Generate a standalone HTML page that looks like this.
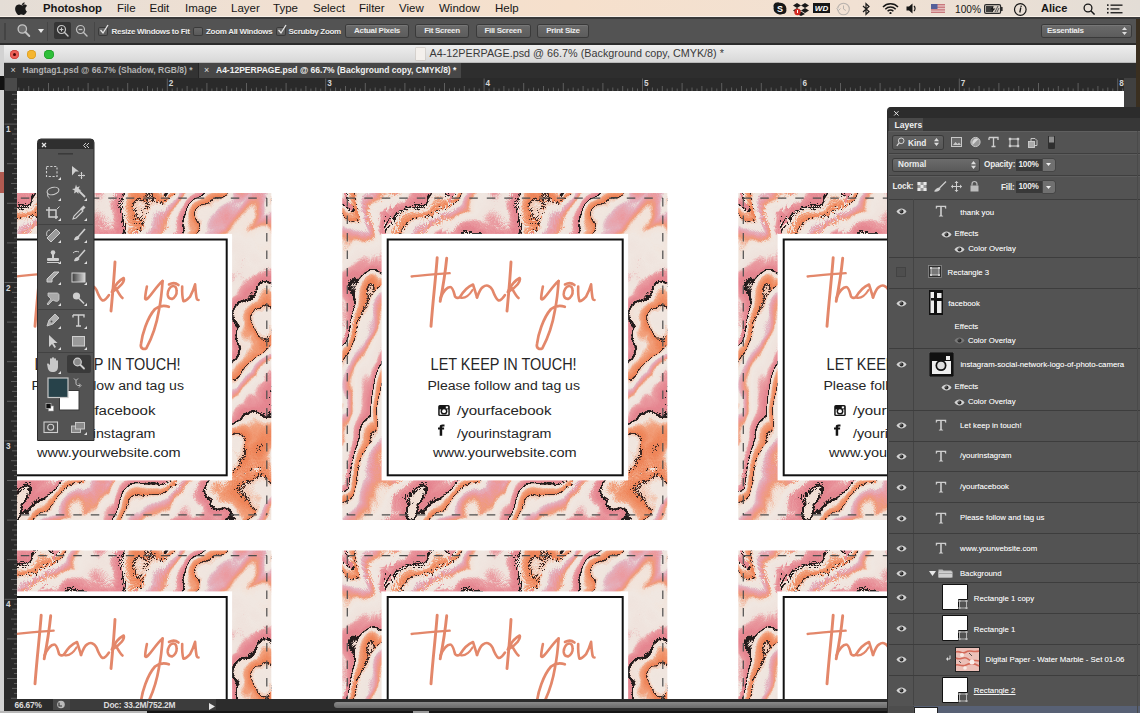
<!DOCTYPE html>
<html><head><meta charset="utf-8">
<style>
*{margin:0;padding:0;box-sizing:border-box}
html,body{width:1140px;height:713px;overflow:hidden;background:#3a3a3a;font-family:"Liberation Sans",sans-serif}
.a{position:absolute}
#menubar{left:0;top:0;width:1140px;height:16px;background:linear-gradient(90deg,#e4ddd6 0%,#f0e0d2 22%,#f6e0cc 50%,#f1e1d3 75%,#e3ddd6 100%);}
#menubar span{position:absolute;top:2px;font-size:11.5px;color:#161616;line-height:13px;white-space:nowrap}
#mbline{left:0;top:16px;width:1140px;height:1px;background:#f8f0e8}
#mbdark{left:0;top:17px;width:1140px;height:2px;background:#393939}
#opts{left:0;top:19px;width:1140px;height:24px;background:#535353}
#optsb{left:0;top:43px;width:1140px;height:2px;background:#2c2c2c}
.ot{position:absolute;top:27px;font-size:8px;font-weight:bold;line-height:10px;color:#ececec;white-space:nowrap;letter-spacing:-0.3px;text-shadow:0 1px 0 #3a3a3a}
.cb{position:absolute;top:27px;width:10px;height:9px;border-radius:2px;background:linear-gradient(#6a6a6a,#575757);box-shadow:inset 0 0 0 1px #3a3a3a}
.btn{position:absolute;top:25px;height:12px;border-radius:2px;background:linear-gradient(#6a6a6a,#5c5c5c);box-shadow:0 0 0 1px #3a3a3a, inset 0 1px 0 #777;color:#ececec;font-size:8px;font-weight:bold;line-height:12px;text-align:center;white-space:nowrap;letter-spacing:-0.3px}
#deskL{left:0;top:45px;width:4px;height:668px;background:#d2d2d2}
#deskR{left:1136px;top:19px;width:4px;height:694px;background:#3a2f20}
#title{left:4px;top:45px;width:1132px;height:18px;background:linear-gradient(#eeeeee,#d8d8d8);border-bottom:1px solid #b8b8b8}
#tabs{left:4px;top:63px;width:1132px;height:15px;background:#2e2e2e}
.tab{position:absolute;top:0;height:15px;font-size:8.5px;font-weight:bold;line-height:15px;white-space:nowrap;color:#9a9a9a}
#ruler{left:4px;top:78px;width:1120px;height:13px;background:#2a2a2a}
#vruler{left:4px;top:91px;width:13px;height:608px;background:#2a2a2a}
#corner{left:5px;top:78px;width:12px;height:13px;background:#4a4a4a}
#canvas{left:17px;top:91px;width:1107px;height:608px;background:#fff;overflow:hidden}
#vscroll{left:1124px;top:78px;width:12px;height:621px;background:#404040}
#status{left:4px;top:699px;width:1132px;height:14px;background:#2c2c2c}
</style></head><body>
<!-- MENUBAR -->
<div id="menubar" class="a">
  <svg class="a" style="left:15px;top:1px" width="14" height="15" viewBox="0 0 14 15"><path d="M9.6 1.2c-.8.1-1.7.6-2.2 1.3-.4.5-.8 1.3-.7 2.1.9 0 1.7-.5 2.2-1.2.5-.6.8-1.4.7-2.2zM11.9 10.3c-.3.8-.5 1.1-.9 1.8-.6.9-1.4 2-2.4 2-.9 0-1.1-.6-2.3-.6s-1.5.6-2.4.6c-1 0-1.7-1-2.3-1.9C-.1 9.8-.3 6.9.8 5.3c.7-1.1 1.9-1.8 3-1.8s1.8.6 2.8.6c.9 0 1.5-.6 2.8-.6 1 0 2 .5 2.7 1.4-2.4 1.3-2 4.7-.2 5.4z" fill="#1a1a1a"/></svg>
  <span style="left:43px;font-weight:bold;font-size:11.3px">Photoshop</span>
  <span style="left:117px">File</span>
  <span style="left:149.5px">Edit</span>
  <span style="left:185px">Image</span>
  <span style="left:231px">Layer</span>
  <span style="left:273px">Type</span>
  <span style="left:313px">Select</span>
  <span style="left:359px">Filter</span>
  <span style="left:399px">View</span>
  <span style="left:439px">Window</span>
  <span style="left:495px">Help</span>
  <!-- status icons -->
  <svg class="a" style="left:773px;top:2px" width="14" height="13" viewBox="0 0 14 13"><path d="M4 0.5a3.5 3.5 0 0 0-3.3 4.7A6 6 0 0 0 7 12.4a6 6 0 0 0 2.8-.4A3.5 3.5 0 0 0 13.3 7.6 6 6 0 0 0 6.6.7 3.5 3.5 0 0 0 4 .5z" fill="#171717"/><text x="7" y="10" font-size="9" font-weight="bold" fill="#fff" text-anchor="middle" font-family="Liberation Sans">S</text></svg>
  <svg class="a" style="left:793px;top:2px" width="16" height="14" viewBox="0 0 16 14"><path d="M4 1l4 2.5-4 2.5-4-2.5zM12 1l4 2.5-4 2.5-4-2.5zM4 6l4 2.5-4 2.5-4-2.5zM12 6l4 2.5-4 2.5-4-2.5zM8 9.5l4 2.5-4 2-4-2z" fill="#181818"/><circle cx="4.5" cy="10" r="3.2" fill="#d42a22"/><rect x="4" y="8" width="1" height="3" fill="#fff"/></svg>
  <svg class="a" style="left:813px;top:3px" width="17" height="10" viewBox="0 0 17 10"><rect width="17" height="10" fill="#161616"/><text x="8.5" y="8" font-size="8" font-weight="bold" font-style="italic" fill="#fff" text-anchor="middle" font-family="Liberation Sans">WD</text></svg>
  <svg class="a" style="left:836px;top:2px" width="14" height="14" viewBox="0 0 14 14"><circle cx="7.5" cy="7" r="5.8" fill="none" stroke="#b8b2ad" stroke-width="1.1"/><path d="M7.5 3.5V7l2.3 1.5" fill="none" stroke="#b8b2ad" stroke-width="1"/><path d="M0.5 6.5l2 2 2-2" fill="#e9e0d8" stroke="#b8b2ad" stroke-width="1"/></svg>
  <svg class="a" style="left:862px;top:2px" width="9" height="14" viewBox="0 0 9 14"><path d="M1 4l6 5.5-3 2.8V1.7l3 2.8L1 10" fill="none" stroke="#1a1a1a" stroke-width="1.2"/></svg>
  <svg class="a" style="left:882px;top:3px" width="17" height="11" viewBox="0 0 17 11"><path d="M1 4a10.5 10.5 0 0 1 15 0M3.3 6.2a7.2 7.2 0 0 1 10.4 0M5.6 8.3a4 4 0 0 1 5.8 0" fill="none" stroke="#161616" stroke-width="1.5"/><circle cx="8.5" cy="10" r="1.1" fill="#161616"/></svg>
  <svg class="a" style="left:906px;top:3px" width="11" height="11" viewBox="0 0 11 11"><path d="M0.5 3.5h2.5l3.5-3v10l-3.5-3H0.5z" fill="#161616"/><path d="M8 3a3.5 3.5 0 0 1 0 5" fill="none" stroke="#161616" stroke-width="1.2"/></svg>
  <svg class="a" style="left:931px;top:4px" width="14" height="9" viewBox="0 0 14 9"><rect width="14" height="9" fill="#c9787c"/><rect y="1.3" width="14" height="1.3" fill="#e6c4c2"/><rect y="3.9" width="14" height="1.3" fill="#e6c4c2"/><rect y="6.5" width="14" height="1.3" fill="#e6c4c2"/><rect width="6.5" height="5" fill="#55609a"/></svg>
  <span style="left:955px;font-size:10.2px;top:3px">100%</span>
  <svg class="a" style="left:984px;top:4px" width="19" height="10" viewBox="0 0 19 10"><rect x="0.6" y="0.6" width="16" height="8.8" rx="1.5" fill="#d9d0c6" stroke="#2a2a2a" stroke-width="1.2"/><rect x="17" y="3" width="1.6" height="4" fill="#2a2a2a"/><rect x="2" y="2" width="7" height="6" fill="#3c3c3c"/><path d="M9.8 1.8L6.2 5.4h2.6l-1.2 3 3.8-3.8H8.8z" fill="#111"/><path d="M11 8l3-6M13 8l2-4" stroke="#555" stroke-width="1"/></svg>
  <svg class="a" style="left:1013px;top:3px" width="15" height="13" viewBox="0 0 15 13"><circle cx="7.3" cy="6.5" r="5.8" fill="none" stroke="#161616" stroke-width="1.2"/><path d="M7.8 4.5l-1 5" stroke="#161616" stroke-width="1.3"/><circle cx="8.1" cy="3.3" r=".8" fill="#161616"/></svg>
  <span style="left:1041px;font-weight:bold;font-size:11px;top:2px">Alice</span>
  <svg class="a" style="left:1083px;top:3px" width="13" height="12" viewBox="0 0 13 12"><circle cx="5" cy="5" r="3.9" fill="none" stroke="#161616" stroke-width="1.3"/><path d="M7.8 7.8l3.8 3.8" stroke="#161616" stroke-width="1.4"/></svg>
  <svg class="a" style="left:1107px;top:4px" width="16" height="10" viewBox="0 0 16 10"><rect x="0" y="0.3" width="1.6" height="1.6" fill="#161616"/><rect x="0" y="4.1" width="1.6" height="1.6" fill="#161616"/><rect x="0" y="7.9" width="1.6" height="1.6" fill="#161616"/><rect x="3.5" y="0.5" width="12" height="1.3" fill="#161616"/><rect x="3.5" y="4.3" width="9" height="1.3" fill="#161616"/><rect x="3.5" y="8.1" width="12" height="1.3" fill="#161616"/></svg>
</div>
<div id="mbline" class="a"></div>
<div id="mbdark" class="a"></div>
<!-- OPTIONS BAR -->
<div id="opts" class="a"></div>
<div id="optsb" class="a"></div>
<div class="a" style="left:4px;top:23px;width:2px;height:17px;background:#444"></div>
<svg class="a" style="left:16px;top:23px" width="16" height="15" viewBox="0 0 16 15"><circle cx="6.3" cy="6" r="4.2" fill="#6e6e6e" stroke="#c4c4c4" stroke-width="1.3"/><path d="M9.3 9l4 4" stroke="#c4c4c4" stroke-width="1.9" stroke-linecap="round"/></svg>
<svg class="a" style="left:38px;top:29px" width="6" height="4" viewBox="0 0 6 4"><path d="M0 0h6L3 4z" fill="#e8e8e8"/></svg>
<div class="a" style="left:47px;top:22px;width:1px;height:19px;background:#464646"></div>
<div class="a" style="left:54px;top:22px;width:17px;height:17px;background:#353535;border-radius:2px"></div>
<svg class="a" style="left:55px;top:23px" width="15" height="15" viewBox="0 0 15 15"><circle cx="6.5" cy="6.5" r="4" fill="none" stroke="#c8c8c8" stroke-width="1.2"/><path d="M4.6 6.5h3.8M6.5 4.6v3.8" stroke="#c8c8c8" stroke-width="1.1"/><path d="M9.3 9.3l3.7 3.7" stroke="#c8c8c8" stroke-width="1.4" stroke-linecap="round"/></svg>
<svg class="a" style="left:74px;top:23px" width="15" height="15" viewBox="0 0 15 15"><circle cx="6.5" cy="6.5" r="4" fill="none" stroke="#c0c0c0" stroke-width="1.2"/><path d="M4.6 6.5h3.8" stroke="#c0c0c0" stroke-width="1.3"/><path d="M9.3 9.3l3.7 3.7" stroke="#c0c0c0" stroke-width="1.4" stroke-linecap="round"/></svg>
<div class="a" style="left:94px;top:22px;width:1px;height:19px;background:#464646"></div>
<div class="cb" style="left:98px"></div>
<svg class="a" style="left:99px;top:24px" width="10" height="11" viewBox="0 0 10 11"><path d="M1.5 6l2.5 3 5-8" fill="none" stroke="#e6e6e6" stroke-width="1.3"/></svg>
<span class="ot" style="left:111.5px">Resize Windows to Fit</span>
<div class="cb" style="left:193px"></div>
<span class="ot" style="left:206px">Zoom All Windows</span>
<div class="cb" style="left:276px"></div>
<svg class="a" style="left:277px;top:24px" width="10" height="11" viewBox="0 0 10 11"><path d="M1.5 6l2.5 3 5-8" fill="none" stroke="#e6e6e6" stroke-width="1.3"/></svg>
<span class="ot" style="left:288.5px">Scrubby Zoom</span>
<div class="btn" style="left:346px;width:62px">Actual Pixels</div>
<div class="btn" style="left:416px;width:52px">Fit Screen</div>
<div class="btn" style="left:476.5px;width:53px">Fill Screen</div>
<div class="btn" style="left:538px;width:50px">Print Size</div>
<div class="btn" style="left:1042px;width:89px;text-align:left;padding-left:5px">Essentials<svg class="a" style="right:4px;top:2px" width="5" height="8" viewBox="0 0 5 8"><path d="M0 3h5L2.5 0zM0 5h5L2.5 8z" fill="#ddd"/></svg></div>
<!-- DESKTOP EDGES -->
<div id="deskL" class="a"></div>
<div class="a" style="left:0;top:76px;width:4px;height:14px;background:#111"></div>
<div class="a" style="left:0;top:172px;width:4px;height:21px;background:#b05a50"></div>
<div id="deskR" class="a"></div>
<!-- TITLE -->
<div id="title" class="a"></div>
<div class="a" style="left:9.5px;top:49.7px;width:9.6px;height:9.6px;border-radius:50%;background:#ec5f58;box-shadow:inset 0 0 0 .7px #c8403a"><div class="a" style="left:3.1px;top:3.1px;width:3.4px;height:3.4px;border-radius:50%;background:#4a0806"></div></div>
<div class="a" style="left:26.7px;top:49.7px;width:9.6px;height:9.6px;border-radius:50%;background:#f5b631;box-shadow:inset 0 0 0 .7px #d89a20"></div>
<div class="a" style="left:44.2px;top:49.7px;width:9.6px;height:9.6px;border-radius:50%;background:#2fbf3a;box-shadow:inset 0 0 0 .7px #1f9a28"></div>
<div class="a" style="left:416px;top:48px;width:9px;height:12px;background:#f4f0ec;box-shadow:0 0 0 .5px #c8c0b8"></div>
<span class="a" style="left:429.5px;top:47px;font-size:10.8px;line-height:13px;color:#3a3a3a;white-space:nowrap">A4-12PERPAGE.psd @ 66.7% (Background copy, CMYK/8) *</span>
<!-- TABS -->
<div id="tabs" class="a">
  <div class="tab" style="left:0;width:194px;background:#333"><span style="position:absolute;left:6.5px;color:#d0d0d0;font-weight:normal;font-size:9px">&#215;</span><span style="position:absolute;left:18.5px;color:#b4b4b4">Hangtag1.psd @ 66.7% (Shadow, RGB/8) *</span></div>
  <div class="a" style="left:194px;top:0;width:1px;height:15px;background:#262626"></div>
  <div class="tab" style="left:195px;width:262px;background:#474747;color:#f2f2f2"><span style="position:absolute;left:5px;color:#e0e0e0;font-weight:normal;font-size:9px">&#215;</span><span style="position:absolute;left:17px">A4-12PERPAGE.psd @ 66.7% (Background copy, CMYK/8) *</span></div>
</div>
<!-- RULERS -->
<div id="ruler" class="a"></div>
<div id="vruler" class="a"></div>
<div id="corner" class="a"></div>
<div id="vscroll" class="a"></div>
<!-- CANVAS -->
<div id="canvas" class="a">
<svg width="1107" height="608" viewBox="0 0 1107 608" style="position:absolute;left:0;top:0">
<defs>
<linearGradient id="bands" gradientUnits="userSpaceOnUse" x1="0" y1="0" x2="70" y2="45" spreadMethod="repeat">
 <stop offset="0" stop-color="#f0e7e1"/>
 <stop offset="0.11" stop-color="#efe2dc"/>
 <stop offset="0.16" stop-color="#ea9ea3"/>
 <stop offset="0.26" stop-color="#e5848f"/>
 <stop offset="0.295" stop-color="#e08a90"/>
 <stop offset="0.30" stop-color="#1f1a1a"/>
 <stop offset="0.328" stop-color="#2a2020"/>
 <stop offset="0.335" stop-color="#f3ddd2"/>
 <stop offset="0.39" stop-color="#f0e4dc"/>
 <stop offset="0.44" stop-color="#f2a27e"/>
 <stop offset="0.53" stop-color="#ee8458"/>
 <stop offset="0.545" stop-color="#ee8458"/>
 <stop offset="0.55" stop-color="#3a2622"/>
 <stop offset="0.562" stop-color="#3a2622"/>
 <stop offset="0.567" stop-color="#f1c1aa"/>
 <stop offset="0.61" stop-color="#f1e6df"/>
 <stop offset="0.70" stop-color="#eee4de"/>
 <stop offset="0.74" stop-color="#e3b3c0"/>
 <stop offset="0.81" stop-color="#eb9aa0"/>
 <stop offset="0.88" stop-color="#f09a78"/>
 <stop offset="0.93" stop-color="#f2e2d8"/>
 <stop offset="1" stop-color="#f0e7e1"/>
</linearGradient>
<filter id="mf" x="-20%" y="-20%" width="140%" height="140%">
 <feTurbulence type="turbulence" baseFrequency="0.009 0.007" numOctaves="3" seed="3" result="t"/>
 <feDisplacementMap in="SourceGraphic" in2="t" scale="110" xChannelSelector="R" yChannelSelector="G"/>
 <feGaussianBlur stdDeviation="0.55"/>
</filter>
<clipPath id="cardclip"><rect x="0" y="0" width="325" height="327"/></clipPath>
<g id="card">
 <g clip-path="url(#cardclip)"><g filter="url(#mf)"><rect x="-100" y="-100" width="525" height="527" fill="url(#bands)"/></g></g>
 <path d="M4.5 5.2H320.5M5 5V322M320.5 5V322M4.5 322H320.5" stroke="#4d4d4d" stroke-width="1.2" stroke-dasharray="8.5 9" fill="none"/>
 <rect x="39.3" y="41" width="246.5" height="246.5" fill="#fff"/>
 <rect x="45.4" y="46.6" width="235" height="235.8" fill="none" stroke="#111" stroke-width="2"/>
 <g transform="translate(-342.3 -192.9)" fill="none" stroke="#e3876a" stroke-width="2.6" stroke-linecap="round" stroke-linejoin="round">
  <path d="M411.6 276.5C422 275.5 436 274 449.7 273.2" stroke-width="2.3"/>
  <path d="M437.2 257.7C436 275 433 300 431 326.3" stroke-width="2.9"/>
  <path d="M446.7 258.3C445 275 442 292 440.2 301.3" stroke-width="2.9"/>
  <path d="M440.5 298C443 292 447 287 450.2 287C453 287 454 293 455 296.5C456 298 458 298.5 460 297"/>
  <path d="M460 297C463 292 468 286.5 473 284.5C474.5 289 476 294 477 297.5"/><path d="M461 297.8C465 298.3 469.5 295 472.5 290" stroke-width="2.2"/>
  <path d="M477 297.5C479 292 481 288 483 287C486 284.5 490 285 492.5 290C494 294 496 299 498.4 300.4C500.5 301 503 298 505 295"/>
  <path d="M511 262C510 280 508.5 295 507 311" stroke-width="2.9"/>
  <path d="M507.8 292C510 287 514 281 519.7 278C521 281 517 287 508 292M511.8 288C514 292 516 296 518.5 298"/>
  <path d="M542.9 286.6C542 291 541 296 541.2 298.9C542 301 546 296 549 292C552 288 555 284 558.6 281"/>
  <path d="M558.6 281C558 290 557 300 555 310C553 322 549 336 542.3 348.3C539.5 350 536 348 537 344C538 335 543 318 551 309C555 306 560 305 564.8 306.8" stroke-width="2.7"/>
  <path d="M569.3 286C566 286 563.5 291 563.7 294.4C564 298 566 299 568.1 298.9C571 298 573 294 572.6 291C572.5 288 571 286 569.3 286M565 284.5C568 282.8 572 283 574.5 285"/>
  <path d="M578.2 286.6C578 292 578.5 298 579.4 301.2C581 301.5 584 299 586.1 296.7C588 293 590 288 591.1 284.3C591.5 290 592 296 592.8 298.9C593 299.5 594 300 594.5 300"/>
 </g>
 <g font-family="Liberation Sans" fill="#262626">
  <text x="88.3" y="177.3" font-size="16.2" textLength="146" lengthAdjust="spacingAndGlyphs">LET KEEP IN TOUCH!</text>
  <text x="85.1" y="196.9" font-size="12" textLength="152.6" lengthAdjust="spacingAndGlyphs">Please follow and tag us</text>
  <text x="114.7" y="221.7" font-size="12" textLength="94.5" lengthAdjust="spacingAndGlyphs">/yourfacebook</text>
  <text x="114.7" y="244.9" font-size="12" textLength="94.5" lengthAdjust="spacingAndGlyphs">/yourinstagram</text>
  <text x="90.7" y="264.5" font-size="12" textLength="143.6" lengthAdjust="spacingAndGlyphs">www.yourwebsite.com</text>
 </g>
 <g transform="translate(95.9 212.2)"><rect x="0" y="0" width="11.6" height="11" rx="1.6" fill="#151515"/><rect x="1.5" y="4.3" width="8.6" height="5.3" fill="#fff"/><circle cx="5.8" cy="6.1" r="3.4" fill="#151515"/><circle cx="5.8" cy="6.1" r="1.9" fill="#fff"/><rect x="7.6" y="1.3" width="2.3" height="2" fill="#fff"/></g>
 <path d="M97.4 242.9V233.8C97.4 232.2 98.4 231.5 100.2 231.5H102.2V233.6H100.8C100.1 233.6 99.9 233.9 99.9 234.6V242.9Z" fill="#151515"/><rect x="95.7" y="234.6" width="6.1" height="2" fill="#151515"/>
</g>
</defs>
<use href="#card" x="-70.7" y="101.9"/>
<use href="#card" x="325.3" y="101.9"/>
<use href="#card" x="721.3" y="101.9"/>
<use href="#card" x="-70.7" y="459.4"/>
<use href="#card" x="325.3" y="459.4"/>
<use href="#card" x="721.3" y="459.4"/>
</svg>
</div>
<!-- STATUS -->
<div id="status" class="a"></div>
<!--RULERS-->
<svg class="a" style="left:0;top:0" width="1140" height="100" viewBox="0 0 1140 100"><path d="M18.8 87.5V91 M23.8 88.5V91 M28.7 86V91 M33.7 88.5V91 M38.6 87.5V91 M43.6 88.5V91 M48.5 83V91 M53.5 88.5V91 M58.4 87.5V91 M63.4 88.5V91 M68.3 86V91 M73.3 88.5V91 M78.2 87.5V91 M83.2 88.5V91 M88.1 83V91 M93.1 88.5V91 M98.0 87.5V91 M103.0 88.5V91 M107.9 86V91 M112.9 88.5V91 M117.8 87.5V91 M122.8 88.5V91 M127.7 83V91 M132.7 88.5V91 M137.6 87.5V91 M142.6 88.5V91 M147.5 86V91 M152.5 88.5V91 M157.4 87.5V91 M162.4 88.5V91 M167.3 78.5V91 M172.2 88.5V91 M177.2 87.5V91 M182.2 88.5V91 M187.1 86V91 M192.1 88.5V91 M197.0 87.5V91 M202.0 88.5V91 M206.9 83V91 M211.9 88.5V91 M216.8 87.5V91 M221.8 88.5V91 M226.7 86V91 M231.7 88.5V91 M236.6 87.5V91 M241.6 88.5V91 M246.5 83V91 M251.5 88.5V91 M256.4 87.5V91 M261.4 88.5V91 M266.3 86V91 M271.2 88.5V91 M276.2 87.5V91 M281.2 88.5V91 M286.1 83V91 M291.1 88.5V91 M296.0 87.5V91 M301.0 88.5V91 M305.9 86V91 M310.9 88.5V91 M315.8 87.5V91 M320.8 88.5V91 M325.7 78.5V91 M330.6 88.5V91 M335.6 87.5V91 M340.6 88.5V91 M345.5 86V91 M350.5 88.5V91 M355.4 87.5V91 M360.4 88.5V91 M365.3 83V91 M370.2 88.5V91 M375.2 87.5V91 M380.1 88.5V91 M385.1 86V91 M390.1 88.5V91 M395.0 87.5V91 M400.0 88.5V91 M404.9 83V91 M409.9 88.5V91 M414.8 87.5V91 M419.8 88.5V91 M424.7 86V91 M429.7 88.5V91 M434.6 87.5V91 M439.6 88.5V91 M444.5 83V91 M449.5 88.5V91 M454.4 87.5V91 M459.4 88.5V91 M464.3 86V91 M469.2 88.5V91 M474.2 87.5V91 M479.2 88.5V91 M484.1 78.5V91 M489.1 88.5V91 M494.0 87.5V91 M499.0 88.5V91 M503.9 86V91 M508.9 88.5V91 M513.8 87.5V91 M518.8 88.5V91 M523.7 83V91 M528.7 88.5V91 M533.6 87.5V91 M538.5 88.5V91 M543.5 86V91 M548.5 88.5V91 M553.4 87.5V91 M558.4 88.5V91 M563.3 83V91 M568.2 88.5V91 M573.2 87.5V91 M578.2 88.5V91 M583.1 86V91 M588.0 88.5V91 M593.0 87.5V91 M598.0 88.5V91 M602.9 83V91 M607.9 88.5V91 M612.8 87.5V91 M617.8 88.5V91 M622.7 86V91 M627.7 88.5V91 M632.6 87.5V91 M637.5 88.5V91 M642.5 78.5V91 M647.5 88.5V91 M652.4 87.5V91 M657.4 88.5V91 M662.3 86V91 M667.2 88.5V91 M672.2 87.5V91 M677.2 88.5V91 M682.1 83V91 M687.0 88.5V91 M692.0 87.5V91 M697.0 88.5V91 M701.9 86V91 M706.9 88.5V91 M711.8 87.5V91 M716.8 88.5V91 M721.7 83V91 M726.7 88.5V91 M731.6 87.5V91 M736.5 88.5V91 M741.5 86V91 M746.5 88.5V91 M751.4 87.5V91 M756.4 88.5V91 M761.3 83V91 M766.2 88.5V91 M771.2 87.5V91 M776.2 88.5V91 M781.1 86V91 M786.0 88.5V91 M791.0 87.5V91 M796.0 88.5V91 M800.9 78.5V91 M805.9 88.5V91 M810.8 87.5V91 M815.8 88.5V91 M820.7 86V91 M825.7 88.5V91 M830.6 87.5V91 M835.5 88.5V91 M840.5 83V91 M845.5 88.5V91 M850.4 87.5V91 M855.4 88.5V91 M860.3 86V91 M865.2 88.5V91 M870.2 87.5V91 M875.2 88.5V91 M880.1 83V91 M885.0 88.5V91 M890.0 87.5V91 M895.0 88.5V91 M899.9 86V91 M904.9 88.5V91 M909.8 87.5V91 M914.8 88.5V91 M919.7 83V91 M924.7 88.5V91 M929.6 87.5V91 M934.5 88.5V91 M939.5 86V91 M944.5 88.5V91 M949.4 87.5V91 M954.4 88.5V91 M959.3 78.5V91 M964.2 88.5V91 M969.2 87.5V91 M974.2 88.5V91 M979.1 86V91 M984.0 88.5V91 M989.0 87.5V91 M994.0 88.5V91 M998.9 83V91 M1003.9 88.5V91 M1008.8 87.5V91 M1013.8 88.5V91 M1018.7 86V91 M1023.7 88.5V91 M1028.6 87.5V91 M1033.5 88.5V91 M1038.5 83V91 M1043.5 88.5V91 M1048.4 87.5V91 M1053.4 88.5V91 M1058.3 86V91 M1063.2 88.5V91 M1068.2 87.5V91 M1073.2 88.5V91 M1078.1 83V91 M1083.0 88.5V91 M1088.0 87.5V91 M1093.0 88.5V91 M1097.9 86V91 M1102.9 88.5V91 M1107.8 87.5V91 M1112.8 88.5V91 M1117.7 78.5V91 M1122.7 88.5V91" stroke="#5e5e5e" stroke-width="1" fill="none"/><text x="168.8" y="86" font-size="8.2" font-weight="bold" fill="#d6d6d6" font-family="Liberation Sans">2</text><text x="327.2" y="86" font-size="8.2" font-weight="bold" fill="#d6d6d6" font-family="Liberation Sans">3</text><text x="485.6" y="86" font-size="8.2" font-weight="bold" fill="#d6d6d6" font-family="Liberation Sans">4</text><text x="644.0" y="86" font-size="8.2" font-weight="bold" fill="#d6d6d6" font-family="Liberation Sans">5</text><text x="802.4" y="86" font-size="8.2" font-weight="bold" fill="#d6d6d6" font-family="Liberation Sans">6</text><text x="960.8" y="86" font-size="8.2" font-weight="bold" fill="#d6d6d6" font-family="Liberation Sans">7</text><text x="1119.2" y="86" font-size="8.2" font-weight="bold" fill="#d6d6d6" font-family="Liberation Sans">8</text></svg>
<svg class="a" style="left:0;top:0" width="20" height="713" viewBox="0 0 20 713"><path d="M12 94.4H17 M14 99.3H17 M11 104.3H17 M14 109.2H17 M12 114.2H17 M14 119.2H17 M4.5 124.1H17 M14 129.0H17 M12 134.0H17 M14 138.9H17 M11 143.9H17 M14 148.8H17 M12 153.8H17 M14 158.8H17 M7 163.7H17 M14 168.6H17 M12 173.6H17 M14 178.6H17 M11 183.5H17 M14 188.4H17 M12 193.4H17 M14 198.3H17 M7 203.3H17 M14 208.2H17 M12 213.2H17 M14 218.1H17 M11 223.1H17 M14 228.1H17 M12 233.0H17 M14 237.9H17 M7 242.9H17 M14 247.8H17 M12 252.8H17 M14 257.8H17 M11 262.7H17 M14 267.6H17 M12 272.6H17 M14 277.6H17 M4.5 282.5H17 M14 287.4H17 M12 292.4H17 M14 297.4H17 M11 302.3H17 M14 307.2H17 M12 312.2H17 M14 317.1H17 M7 322.1H17 M14 327.1H17 M12 332.0H17 M14 336.9H17 M11 341.9H17 M14 346.9H17 M12 351.8H17 M14 356.8H17 M7 361.7H17 M14 366.6H17 M12 371.6H17 M14 376.6H17 M11 381.5H17 M14 386.4H17 M12 391.4H17 M14 396.4H17 M7 401.3H17 M14 406.2H17 M12 411.2H17 M14 416.1H17 M11 421.1H17 M14 426.1H17 M12 431.0H17 M14 436.0H17 M4.5 440.9H17 M14 445.9H17 M12 450.8H17 M14 455.8H17 M11 460.7H17 M14 465.6H17 M12 470.6H17 M14 475.6H17 M7 480.5H17 M14 485.5H17 M12 490.4H17 M14 495.4H17 M11 500.3H17 M14 505.2H17 M12 510.2H17 M14 515.1H17 M7 520.1H17 M14 525.0H17 M12 530.0H17 M14 535.0H17 M11 539.9H17 M14 544.9H17 M12 549.8H17 M14 554.8H17 M7 559.7H17 M14 564.7H17 M12 569.6H17 M14 574.5H17 M11 579.5H17 M14 584.5H17 M12 589.4H17 M14 594.4H17 M4.5 599.3H17 M14 604.2H17 M12 609.2H17 M14 614.2H17 M11 619.1H17 M14 624.0H17 M12 629.0H17 M14 634.0H17 M7 638.9H17 M14 643.9H17 M12 648.8H17 M14 653.8H17 M11 658.7H17 M14 663.7H17 M12 668.6H17 M14 673.5H17 M7 678.5H17 M14 683.5H17 M12 688.4H17 M14 693.4H17 M11 698.3H17" stroke="#5e5e5e" stroke-width="1" fill="none"/><text x="6" y="132.1" font-size="8.2" font-weight="bold" fill="#d6d6d6" font-family="Liberation Sans">1</text><text x="6" y="290.5" font-size="8.2" font-weight="bold" fill="#d6d6d6" font-family="Liberation Sans">2</text><text x="6" y="448.9" font-size="8.2" font-weight="bold" fill="#d6d6d6" font-family="Liberation Sans">3</text><text x="6" y="607.3" font-size="8.2" font-weight="bold" fill="#d6d6d6" font-family="Liberation Sans">4</text></svg>
<div class="a" style="left:5px;top:699px;width:1131px;height:11.5px;background:#2c2c2c;border-radius:0 0 0 4px"></div>
<div class="a" style="left:0;top:710.5px;width:1140px;height:3px;background:#161616"></div>
<div class="a" style="left:0;top:710.5px;width:147px;height:3px;background:#b8b8b8"></div>
<div class="a" style="left:413px;top:710.5px;width:16px;height:3px;background:#9a9a9a"></div>
<span class="a" style="left:14.5px;top:700.5px;font-size:8.4px;line-height:9px;font-weight:bold;color:#dcdcdc;letter-spacing:-.2px">66.67%</span>
<div class="a" style="left:53px;top:699px;width:17px;height:11px;background:#474747"></div>
<svg class="a" style="left:56px;top:700px" width="10" height="9" viewBox="0 0 10 9"><circle cx="5" cy="4.5" r="3.8" fill="#bdbdbd"/><path d="M3 2.5v3.5h3" stroke="#333" stroke-width="1.2" fill="none"/></svg>
<div class="a" style="left:70px;top:699px;width:146px;height:11px;background:#3c3c3c"></div>
<span class="a" style="left:103.5px;top:700.5px;font-size:8.4px;line-height:9px;font-weight:bold;color:#dcdcdc;letter-spacing:-.15px">Doc: 33.2M/752.2M</span>
<svg class="a" style="left:208.5px;top:702.5px" width="6" height="7" viewBox="0 0 6 7"><path d="M0 0l6 3.5L0 7z" fill="#e6e6e6"/></svg>
<div class="a" style="left:334px;top:701.5px;width:600px;height:6.5px;border-radius:3.5px;background:linear-gradient(#8a8a8a,#6a6a6a)"></div>
<!--/RULERS-->
<!--TOOLS-->

<svg class="a" style="left:37px;top:138px" width="58" height="304" viewBox="37 138 58 304">
 <path d="M37.5 142.5a3.5 3.5 0 0 1 3.5-3.5h49.5a3.5 3.5 0 0 1 3.5 3.5V440.5H37.5z" fill="#535353" stroke="#2c2c2c" stroke-width="1"/>
 <path d="M38 142.5a3 3 0 0 1 3-3h49.5a3 3 0 0 1 3 3V149H38z" fill="#2f2f2f"/>
 <path d="M42 143l4 4M46 143l-4 4" stroke="#e8e8e8" stroke-width="1.2"/>
 <path d="M86 143l-2.5 2.5 2.5 2.5M89 143l-2.5 2.5 2.5 2.5" stroke="#d0d0d0" stroke-width="1" fill="none"/>
 <rect x="58" y="153" width="15" height="1.6" fill="#3a3a3a"/>
 <!-- marquee -->
 <rect x="46.5" y="166.5" width="10.5" height="10" fill="none" stroke="#cfcfcf" stroke-width="1.1" stroke-dasharray="2.2 1.6"/>
 <path d="M58 180h3v-3z" fill="#e0e0e0"/>
 <!-- move -->
 <path d="M72 166l7 5.5h-3.5l-3.5 4z" fill="#cfcfcf"/><path d="M78 175.5h7M81.5 172v7" stroke="#cfcfcf" stroke-width="1"/><path d="M78 175.5l1.5-1.2v2.4zM85 175.5l-1.5-1.2v2.4zM81.5 172l-1.2 1.5h2.4zM81.5 179l-1.2-1.5h2.4z" fill="#cfcfcf"/>
 <!-- lasso -->
 <ellipse cx="53" cy="191" rx="6" ry="3.6" fill="none" stroke="#cfcfcf" stroke-width="1.1" transform="rotate(-15 53 191)"/><path d="M48 193.5c-1 2 0 3.5 1.5 4.5" fill="none" stroke="#cfcfcf" stroke-width="1"/>
 <path d="M58 201h3v-3z" fill="#e0e0e0"/>
 <!-- wand -->
 <path d="M77 189l8 8" stroke="#cfcfcf" stroke-width="1.8"/><path d="M76 184.5l1 2.8 2.8-1-1.2 2.8 2.8 1.2-2.8 1-.2 2.8-1.8-2.2-2.6 1.5.6-2.9-2.6-1.4 2.9-.6z" fill="#cfcfcf"/>
 <path d="M84 201h3v-3z" fill="#e0e0e0"/>
 <!-- crop -->
 <path d="M49 207v10h9M46 210h10v9" fill="none" stroke="#cfcfcf" stroke-width="1.5"/><path d="M57 209l2.5-2.5" stroke="#cfcfcf" stroke-width="1"/>
 <path d="M58 221h3v-3z" fill="#e0e0e0"/>
 <!-- eyedropper -->
 <path d="M73 219l1-3 7-7 2 2-7 7z" fill="none" stroke="#cfcfcf" stroke-width="1.1"/><path d="M80.5 208.5l3-3 2 2-3 3z" fill="#cfcfcf"/>
 <path d="M84 221h3v-3z" fill="#e0e0e0"/>
 <rect x="38" y="224" width="55" height="1" fill="#424242"/>
 <!-- heal -->
 <path d="M47 238l9-9 4 4-9 9z" fill="#9a9a9a" stroke="#cfcfcf" stroke-width="1"/><path d="M50 230c-3 0-4 3-3 6" fill="none" stroke="#cfcfcf" stroke-width="1"/>
 <path d="M58 243h3v-3z" fill="#e0e0e0"/>
 <!-- brush -->
 <path d="M85 229l-7 8" stroke="#cfcfcf" stroke-width="1.6"/><path d="M78 236c-2 0-3.5 1.5-4 4 2 .5 4.5 0 5.5-2z" fill="#cfcfcf"/>
 <path d="M84 243h3v-3z" fill="#e0e0e0"/>
 <!-- stamp -->
 <circle cx="53" cy="252.5" r="2.3" fill="#cfcfcf"/><rect x="52" y="254" width="2" height="4" fill="#cfcfcf"/><rect x="47" y="258" width="12" height="3" rx="1" fill="#cfcfcf"/><rect x="47" y="262" width="12" height="1" fill="#cfcfcf"/>
 <path d="M58 264h3v-3z" fill="#e0e0e0"/>
 <!-- history brush -->
 <path d="M85 250l-7 8" stroke="#cfcfcf" stroke-width="1.5"/><path d="M78 257c-2 0-3.5 1.5-4 4 2 .5 4.5 0 5.5-2z" fill="#cfcfcf"/><path d="M73 253c2-2 4-2 6-1" fill="none" stroke="#cfcfcf" stroke-width="1"/>
 <path d="M84 264h3v-3z" fill="#e0e0e0"/>
 <!-- eraser -->
 <path d="M47 279l7-7h5l-7 7v3h-5z" fill="#a8a8a8" stroke="#cfcfcf" stroke-width="1"/>
 <path d="M58 285h3v-3z" fill="#e0e0e0"/>
 <!-- gradient -->
 <defs><linearGradient id="tgr" x1="0" x2="1"><stop offset="0" stop-color="#3a3a3a"/><stop offset="1" stop-color="#d8d8d8"/></linearGradient></defs>
 <rect x="72" y="273" width="13" height="9" fill="url(#tgr)" stroke="#cfcfcf" stroke-width="1"/>
 <path d="M84 285h3v-3z" fill="#e0e0e0"/>
 <!-- smudge -->
 <path d="M48 293h9c1 0 2 1 2 2v4c0 2-2 3-4 2l-2-1-5 5-1-1 4-5-3-3z" fill="#a8a8a8" stroke="#cfcfcf" stroke-width=".8"/>
 <path d="M58 306h3v-3z" fill="#e0e0e0"/>
 <!-- dodge -->
 <circle cx="76.5" cy="296" r="3.6" fill="#cfcfcf"/><path d="M79 298.5l5 5" stroke="#cfcfcf" stroke-width="1.6"/>
 <path d="M84 306h3v-3z" fill="#e0e0e0"/>
 <rect x="38" y="309" width="55" height="1" fill="#424242"/>
 <!-- pen -->
 <path d="M47 326l2-6 6-6 4 4-6 6z" fill="#b0b0b0" stroke="#cfcfcf" stroke-width=".9"/><circle cx="51.5" cy="321.5" r="1" fill="#535353"/>
 <path d="M58 329h3v-3z" fill="#e0e0e0"/>
 <!-- T -->
 <path d="M73 315h11v2.5M73 315v2.5M78.5 315v11M76 326h5" fill="none" stroke="#cfcfcf" stroke-width="1.4"/>
 <path d="M84 329h3v-3z" fill="#e0e0e0"/>
 <!-- arrow -->
 <path d="M49 335v12l3-3 2.5 4 1.5-1-2.5-4h4z" fill="#cfcfcf"/>
 <path d="M58 350h3v-3z" fill="#e0e0e0"/>
 <!-- rect shape -->
 <rect x="72.5" y="336.5" width="12" height="9.5" fill="#9a9a9a" stroke="#cfcfcf" stroke-width="1"/>
 <path d="M84 350h3v-3z" fill="#e0e0e0"/>
 <rect x="38" y="352" width="55" height="1" fill="#424242"/>
 <!-- hand -->
 <path d="M47 364c1-1 2 0 3 1v-6c0-1 2-1 2 0v4-5c0-1 2-1 2 0v5-4c0-1 2-1 2 0v5-3c0-1 2-1 2 0v6c0 3-2 5-5 5h-1c-2 0-3-1-4-3z" fill="#c8c8c8"/>
 <path d="M58 374h3v-3z" fill="#e0e0e0"/>
 <rect x="67" y="355" width="24" height="18" rx="2" fill="#3a3a3a"/>
 <circle cx="77.5" cy="362" r="3.8" fill="#8a8a8a" stroke="#cfcfcf" stroke-width="1.2"/><path d="M80.5 365l3.5 3.5" stroke="#cfcfcf" stroke-width="1.8" stroke-linecap="round"/>
 <!-- colors -->
 <rect x="59.5" y="390.5" width="19.5" height="19.5" fill="#fff" stroke="#3a3a3a" stroke-width="1"/>
 <rect x="48" y="378" width="20" height="19.5" fill="#27424a" stroke="#c8c8c8" stroke-width="1.2"/>
 <path d="M74 378.5l2 2 2-2M76 380.5v3c0 1 1 2 2 2h2M79 383.5l2 2-2 2" fill="none" stroke="#cfcfcf" stroke-width=".9"/>
 <rect x="48.5" y="406" width="5" height="5" fill="#fff" stroke="#999" stroke-width=".6"/><rect x="46" y="403.5" width="5" height="5" fill="#111" stroke="#ccc" stroke-width=".6"/>
 <!-- quick mask -->
 <rect x="44" y="422" width="13.5" height="10.5" fill="none" stroke="#cfcfcf" stroke-width="1.1"/><circle cx="50.7" cy="427.2" r="3" fill="none" stroke="#cfcfcf" stroke-width="1.1"/>
 <!-- screen mode -->
 <rect x="71.5" y="426" width="9" height="6.5" fill="#8a8a8a" stroke="#cfcfcf" stroke-width=".9"/><rect x="75.5" y="422.5" width="9" height="6.5" fill="#8a8a8a" stroke="#cfcfcf" stroke-width=".9"/>
 <path d="M84 435h3v-3z" fill="#e0e0e0"/>
</svg>
<!--/TOOLS-->
<!--LAYERS-->
<style>
.lt{position:absolute;font-size:7.8px;line-height:10px;color:#f2f2f2;white-space:nowrap;text-shadow:0 0 .6px rgba(255,255,255,.55)}
</style>
<div class="a" style="left:888px;top:107px;width:252px;height:606px;background:#535353;border-radius:4px 0 0 0;box-shadow:-1px 0 0 #2a2a2a"></div>
<div class="a" style="left:888px;top:107px;width:252px;height:11px;background:#2c2c2c;border-radius:4px 0 0 0"></div>
<svg class="a" style="left:892.5px;top:110px" width="7" height="7" viewBox="0 0 7 7"><path d="M1.2 1.2l4.3 4.3M5.5 1.2L1.2 5.5" stroke="#e6e6e6" stroke-width="1"/></svg>
<div class="a" style="left:888px;top:118px;width:252px;height:13px;background:#373737"></div>
<div class="a" style="left:889px;top:118px;width:34px;height:13px;background:#4a4a4a"></div>
<span class="a" style="left:894.5px;top:119.5px;font-size:8.6px;font-weight:bold;line-height:10px;color:#f0f0f0">Layers</span>
<div class="a" style="left:889px;top:131px;width:251px;height:1px;background:#5f5f5f"></div>
<div class="a" style="left:893px;top:135.5px;width:49.5px;height:13px;border-radius:2px;background:linear-gradient(#626262,#575757);box-shadow:0 0 0 1px #3b3b3b"></div>
<svg class="a" style="left:896px;top:137px" width="9" height="10" viewBox="0 0 9 10"><circle cx="5.2" cy="3.8" r="2.8" fill="none" stroke="#d8d8d8" stroke-width="1"/><path d="M3.2 5.8L.8 8.8" stroke="#d8d8d8" stroke-width="1.2"/></svg>
<span class="a" style="left:908px;top:137.5px;font-size:8.3px;font-weight:bold;line-height:10px;color:#ececec">Kind</span>
<svg class="a" style="left:934px;top:138px" width="5" height="8" viewBox="0 0 5 8"><path d="M0 3.2h5L2.5 0zM0 4.8h5L2.5 8z" fill="#ddd"/></svg>
<svg class="a" style="left:950px;top:136px" width="110" height="14" viewBox="950 136 110 14">
 <rect x="951.5" y="137.5" width="10" height="9" fill="#6a6a6a" stroke="#c8c8c8" stroke-width="1"/><path d="M953 145l2.5-3 2 2 1.5-1.5 2 2.5z" fill="#c8c8c8"/>
 <circle cx="975.5" cy="142" r="4.6" fill="#9a9a9a" stroke="#c8c8c8" stroke-width="1"/><path d="M972.5 145a4.6 4.6 0 0 1 6-6z" fill="#d8d8d8"/>
 <path d="M989 137.5h9v2.5M989 137.5v2.5M993.5 137.5v9M991.5 146.5h4" fill="none" stroke="#cfcfcf" stroke-width="1.3"/>
 <rect x="1010" y="139" width="8" height="7" fill="none" stroke="#cfcfcf" stroke-width="1.1"/><rect x="1008.8" y="137.8" width="2.4" height="2.4" fill="#cfcfcf"/><rect x="1016.8" y="137.8" width="2.4" height="2.4" fill="#cfcfcf"/><rect x="1008.8" y="144.8" width="2.4" height="2.4" fill="#cfcfcf"/><rect x="1016.8" y="144.8" width="2.4" height="2.4" fill="#cfcfcf"/>
 <rect x="1028.5" y="141.5" width="6" height="6" fill="#aaa" stroke="#cfcfcf" stroke-width=".9"/><path d="M1031 141.5v-3h4l2 2v5h-2.5" fill="none" stroke="#cfcfcf" stroke-width=".9"/>
 <rect x="1048" y="135.5" width="7" height="13.5" rx="1" fill="#2f2f2f"/><rect x="1049" y="136.5" width="5" height="6" fill="#8e8e8e"/>
</svg>
<div class="a" style="left:889px;top:153px;width:251px;height:1px;background:#3f3f3f"></div><div class="a" style="left:889px;top:154px;width:251px;height:1px;background:#5d5d5d"></div>
<div class="a" style="left:893px;top:158.5px;width:86px;height:12px;border-radius:2px;background:linear-gradient(#6c6c6c,#5a5a5a);box-shadow:0 0 0 1px #3b3b3b"></div>
<span class="a" style="left:898px;top:159.5px;font-size:8.2px;font-weight:bold;line-height:10px;color:#ececec">Normal</span>
<svg class="a" style="left:971px;top:160.5px" width="5" height="8" viewBox="0 0 5 8"><path d="M0 3.2h5L2.5 0zM0 4.8h5L2.5 8z" fill="#ddd"/></svg>
<span class="a" style="left:984px;top:160px;font-size:8.2px;font-weight:bold;line-height:10px;color:#ececec;letter-spacing:-.2px">Opacity:</span>
<div class="a" style="left:1016px;top:158.5px;width:26px;height:12px;background:#393939"></div>
<span class="a" style="left:1018.5px;top:159.5px;font-size:8.2px;font-weight:bold;line-height:10px;color:#ececec;letter-spacing:-.2px">100%</span>
<div class="a" style="left:1042.5px;top:158.5px;width:12px;height:12px;border-radius:0 2px 2px 0;background:#707070;box-shadow:0 0 0 .5px #3b3b3b"></div>
<svg class="a" style="left:1046px;top:163.0px" width="5" height="3" viewBox="0 0 5 3"><path d="M0 0h5L2.5 3z" fill="#eee"/></svg>
<div class="a" style="left:1016px;top:181px;width:26px;height:12px;background:#393939"></div>
<span class="a" style="left:1018.5px;top:182px;font-size:8.2px;font-weight:bold;line-height:10px;color:#ececec;letter-spacing:-.2px">100%</span>
<div class="a" style="left:1042.5px;top:181px;width:12px;height:12px;border-radius:0 2px 2px 0;background:#707070;box-shadow:0 0 0 .5px #3b3b3b"></div>
<svg class="a" style="left:1046px;top:185.5px" width="5" height="3" viewBox="0 0 5 3"><path d="M0 0h5L2.5 3z" fill="#eee"/></svg>
<div class="a" style="left:889px;top:174.5px;width:251px;height:1px;background:#3f3f3f"></div><div class="a" style="left:889px;top:175.5px;width:251px;height:1px;background:#5d5d5d"></div>
<span class="a" style="left:892.5px;top:182px;font-size:8.2px;font-weight:bold;line-height:10px;color:#ececec;letter-spacing:-.2px">Lock:</span>
<svg class="a" style="left:916px;top:180px" width="64" height="13" viewBox="916 180 64 13">
 <rect x="917.5" y="182" width="9" height="9" fill="#9a9a9a"/><rect x="917.5" y="182" width="3" height="3" fill="#e8e8e8"/><rect x="923.5" y="182" width="3" height="3" fill="#e8e8e8"/><rect x="920.5" y="185" width="3" height="3" fill="#e8e8e8"/><rect x="917.5" y="188" width="3" height="3" fill="#e8e8e8"/><rect x="923.5" y="188" width="3" height="3" fill="#e8e8e8"/>
 <path d="M946 181.5l-6.5 6.5" stroke="#cfcfcf" stroke-width="1.2"/><path d="M939.5 187.5c-2 0-4 1.5-5.5 4 3 .5 5.5-.5 6.5-2.5z" fill="#cfcfcf"/>
 <path d="M956.5 181.5v10M951.5 186.5h10" stroke="#cfcfcf" stroke-width="1"/><path d="M956.5 181l-2 2h4zM956.5 192l-2-2h4zM951 186.5l2-2v4zM962 186.5l-2-2v4z" fill="#cfcfcf"/>
 <path d="M972 185.5v-1.5a2.5 2.5 0 0 1 5 0v1.5" fill="none" stroke="#bdbdbd" stroke-width="1.2"/><rect x="970.5" y="185.5" width="8" height="6" fill="#bdbdbd"/>
</svg>
<span class="a" style="left:1001px;top:182.5px;font-size:8.2px;font-weight:bold;line-height:10px;color:#ececec;letter-spacing:-.2px">Fill:</span>
<div class="a" style="left:889px;top:198.5px;width:251px;height:1px;background:#3d3d3d"></div>
<div class="a" style="left:913px;top:199px;width:1px;height:506px;background:#444"></div>
<div class="a" style="left:889px;top:257px;width:251px;height:1px;background:#3d3d3d"></div>
<div class="a" style="left:889px;top:287.5px;width:251px;height:1px;background:#3d3d3d"></div>
<div class="a" style="left:889px;top:348px;width:251px;height:1px;background:#3d3d3d"></div>
<div class="a" style="left:889px;top:410px;width:251px;height:1px;background:#3d3d3d"></div>
<div class="a" style="left:889px;top:440.5px;width:251px;height:1px;background:#3d3d3d"></div>
<div class="a" style="left:889px;top:471px;width:251px;height:1px;background:#3d3d3d"></div>
<div class="a" style="left:889px;top:502px;width:251px;height:1px;background:#3d3d3d"></div>
<div class="a" style="left:889px;top:533px;width:251px;height:1px;background:#3d3d3d"></div>
<div class="a" style="left:889px;top:563px;width:251px;height:1px;background:#3d3d3d"></div>
<div class="a" style="left:889px;top:582px;width:251px;height:1px;background:#3d3d3d"></div>
<div class="a" style="left:889px;top:612.5px;width:251px;height:1px;background:#3d3d3d"></div>
<div class="a" style="left:889px;top:643.5px;width:251px;height:1px;background:#3d3d3d"></div>
<div class="a" style="left:889px;top:674.5px;width:251px;height:1px;background:#3d3d3d"></div>
<div class="a" style="left:889px;top:705.5px;width:251px;height:1px;background:#3d3d3d"></div>
<svg class="a" style="left:895.5px;top:207.5px" width="11" height="7" viewBox="0 0 11 7"><path d="M.5 3.5C2 1.2 3.8.5 5.5.5S9 1.2 10.5 3.5C9 5.8 7.2 6.5 5.5 6.5S2 5.8.5 3.5z" fill="#d4d4d4"/><circle cx="5.5" cy="3.4" r="2" fill="#2a2a2a"/><circle cx="4.9" cy="2.8" r=".6" fill="#d4d4d4"/></svg>
<svg class="a" style="left:934.5px;top:204.5px" width="12" height="12" viewBox="0 0 12 12"><path d="M.8 .8h10.4v3h-.8c-.2-1.3-.6-1.9-1.6-1.9H6.8v8.2c0 .5.3.7 1.3.7v.6H3.9v-.6c1 0 1.3-.2 1.3-.7V1.9H3.2c-1 0-1.4.6-1.6 1.9H.8z" fill="#cfcfcf"/></svg>
<span class="lt" style="left:960.3px;top:207.5px;">thank you</span>
<svg class="a" style="left:940.5px;top:230.5px" width="11" height="7" viewBox="0 0 11 7"><path d="M.5 3.5C2 1.2 3.8.5 5.5.5S9 1.2 10.5 3.5C9 5.8 7.2 6.5 5.5 6.5S2 5.8.5 3.5z" fill="#d4d4d4"/><circle cx="5.5" cy="3.4" r="2" fill="#2a2a2a"/><circle cx="4.9" cy="2.8" r=".6" fill="#d4d4d4"/></svg>
<span class="lt" style="left:954.6px;top:229.2px;">Effects</span>
<svg class="a" style="left:954.0px;top:246.0px" width="11" height="7" viewBox="0 0 11 7"><path d="M.5 3.5C2 1.2 3.8.5 5.5.5S9 1.2 10.5 3.5C9 5.8 7.2 6.5 5.5 6.5S2 5.8.5 3.5z" fill="#d4d4d4"/><circle cx="5.5" cy="3.4" r="2" fill="#2a2a2a"/><circle cx="4.9" cy="2.8" r=".6" fill="#d4d4d4"/></svg>
<span class="lt" style="left:968.2px;top:244.4px;">Color Overlay</span>
<div class="a" style="left:896px;top:267px;width:10px;height:10px;background:#4e4e4e;box-shadow:inset 0 0 0 1px #434343"></div>
<svg class="a" style="left:928px;top:265px" width="14" height="13" viewBox="0 0 14 13"><rect x=".5" y=".5" width="13" height="12" fill="#2e2e2e" stroke="#8a8a8a" stroke-width=".8"/><rect x="3" y="3" width="8" height="7" fill="#777" stroke="#cfcfcf" stroke-width="1"/><rect x="2" y="2" width="2" height="2" fill="#cfcfcf"/><rect x="10" y="2" width="2" height="2" fill="#cfcfcf"/><rect x="2" y="9" width="2" height="2" fill="#cfcfcf"/><rect x="10" y="9" width="2" height="2" fill="#cfcfcf"/></svg>
<span class="lt" style="left:947.6px;top:268.1px;">Rectangle 3</span>
<svg class="a" style="left:895.5px;top:299.5px" width="11" height="7" viewBox="0 0 11 7"><path d="M.5 3.5C2 1.2 3.8.5 5.5.5S9 1.2 10.5 3.5C9 5.8 7.2 6.5 5.5 6.5S2 5.8.5 3.5z" fill="#d4d4d4"/><circle cx="5.5" cy="3.4" r="2" fill="#2a2a2a"/><circle cx="4.9" cy="2.8" r=".6" fill="#d4d4d4"/></svg>
<svg class="a" style="left:928.5px;top:290px" width="14" height="25" viewBox="0 0 14 25"><rect width="14" height="25" fill="#111"/><rect x="1.5" y="2" width="3.5" height="21" fill="#eee"/><rect x="8" y="3" width="4.5" height="5" fill="#eee"/><rect x="8" y="11" width="4.5" height="12" fill="#eee"/><rect x="2" y="8" width="3" height="2.5" fill="#111"/></svg>
<span class="lt" style="left:948.2px;top:299.1px;">facebook</span>
<span class="lt" style="left:954.5px;top:321.6px;">Effects</span>
<svg class="a" style="left:954.0px;top:337.1px" width="11" height="7" viewBox="0 0 11 7"><path d="M.5 3.5C2 1.2 3.8.5 5.5.5S9 1.2 10.5 3.5C9 5.8 7.2 6.5 5.5 6.5S2 5.8.5 3.5z" fill="#7a7a7a"/><circle cx="5.5" cy="3.4" r="2" fill="#2a2a2a"/><circle cx="4.9" cy="2.8" r=".6" fill="#7a7a7a"/></svg>
<span class="lt" style="left:967.9px;top:336px;">Color Overlay</span>
<svg class="a" style="left:895.5px;top:360.5px" width="11" height="7" viewBox="0 0 11 7"><path d="M.5 3.5C2 1.2 3.8.5 5.5.5S9 1.2 10.5 3.5C9 5.8 7.2 6.5 5.5 6.5S2 5.8.5 3.5z" fill="#d4d4d4"/><circle cx="5.5" cy="3.4" r="2" fill="#2a2a2a"/><circle cx="4.9" cy="2.8" r=".6" fill="#d4d4d4"/></svg>
<svg class="a" style="left:928.5px;top:351.5px" width="25" height="25" viewBox="0 0 25 25"><rect width="25" height="25" rx="1.5" fill="#111" stroke="#777" stroke-width=".6"/><rect x="3" y="9" width="19" height="13" fill="#eee"/><circle cx="12" cy="13.5" r="5.5" fill="#111"/><circle cx="12" cy="13.5" r="3.8" fill="#ddd"/><rect x="17" y="4" width="4" height="4" fill="#eee"/></svg>
<span class="lt" style="left:960.4px;top:360.2px;">instagram-social-network-logo-of-photo-camera</span>
<svg class="a" style="left:940.5px;top:383.5px" width="11" height="7" viewBox="0 0 11 7"><path d="M.5 3.5C2 1.2 3.8.5 5.5.5S9 1.2 10.5 3.5C9 5.8 7.2 6.5 5.5 6.5S2 5.8.5 3.5z" fill="#d4d4d4"/><circle cx="5.5" cy="3.4" r="2" fill="#2a2a2a"/><circle cx="4.9" cy="2.8" r=".6" fill="#d4d4d4"/></svg>
<span class="lt" style="left:954.5px;top:381.7px;">Effects</span>
<svg class="a" style="left:954.0px;top:398.5px" width="11" height="7" viewBox="0 0 11 7"><path d="M.5 3.5C2 1.2 3.8.5 5.5.5S9 1.2 10.5 3.5C9 5.8 7.2 6.5 5.5 6.5S2 5.8.5 3.5z" fill="#d4d4d4"/><circle cx="5.5" cy="3.4" r="2" fill="#2a2a2a"/><circle cx="4.9" cy="2.8" r=".6" fill="#d4d4d4"/></svg>
<span class="lt" style="left:967.9px;top:396.7px;">Color Overlay</span>
<svg class="a" style="left:895.5px;top:422.0px" width="11" height="7" viewBox="0 0 11 7"><path d="M.5 3.5C2 1.2 3.8.5 5.5.5S9 1.2 10.5 3.5C9 5.8 7.2 6.5 5.5 6.5S2 5.8.5 3.5z" fill="#d4d4d4"/><circle cx="5.5" cy="3.4" r="2" fill="#2a2a2a"/><circle cx="4.9" cy="2.8" r=".6" fill="#d4d4d4"/></svg>
<svg class="a" style="left:934.5px;top:419.0px" width="12" height="12" viewBox="0 0 12 12"><path d="M.8 .8h10.4v3h-.8c-.2-1.3-.6-1.9-1.6-1.9H6.8v8.2c0 .5.3.7 1.3.7v.6H3.9v-.6c1 0 1.3-.2 1.3-.7V1.9H3.2c-1 0-1.4.6-1.6 1.9H.8z" fill="#cfcfcf"/></svg>
<span class="lt" style="left:960px;top:420.5px;">Let keep in touch!</span>
<svg class="a" style="left:895.5px;top:452.5px" width="11" height="7" viewBox="0 0 11 7"><path d="M.5 3.5C2 1.2 3.8.5 5.5.5S9 1.2 10.5 3.5C9 5.8 7.2 6.5 5.5 6.5S2 5.8.5 3.5z" fill="#d4d4d4"/><circle cx="5.5" cy="3.4" r="2" fill="#2a2a2a"/><circle cx="4.9" cy="2.8" r=".6" fill="#d4d4d4"/></svg>
<svg class="a" style="left:934.5px;top:449.5px" width="12" height="12" viewBox="0 0 12 12"><path d="M.8 .8h10.4v3h-.8c-.2-1.3-.6-1.9-1.6-1.9H6.8v8.2c0 .5.3.7 1.3.7v.6H3.9v-.6c1 0 1.3-.2 1.3-.7V1.9H3.2c-1 0-1.4.6-1.6 1.9H.8z" fill="#cfcfcf"/></svg>
<span class="lt" style="left:960px;top:451px;">/yourinstagram</span>
<svg class="a" style="left:895.5px;top:483.5px" width="11" height="7" viewBox="0 0 11 7"><path d="M.5 3.5C2 1.2 3.8.5 5.5.5S9 1.2 10.5 3.5C9 5.8 7.2 6.5 5.5 6.5S2 5.8.5 3.5z" fill="#d4d4d4"/><circle cx="5.5" cy="3.4" r="2" fill="#2a2a2a"/><circle cx="4.9" cy="2.8" r=".6" fill="#d4d4d4"/></svg>
<svg class="a" style="left:934.5px;top:480.5px" width="12" height="12" viewBox="0 0 12 12"><path d="M.8 .8h10.4v3h-.8c-.2-1.3-.6-1.9-1.6-1.9H6.8v8.2c0 .5.3.7 1.3.7v.6H3.9v-.6c1 0 1.3-.2 1.3-.7V1.9H3.2c-1 0-1.4.6-1.6 1.9H.8z" fill="#cfcfcf"/></svg>
<span class="lt" style="left:960px;top:482px;">/yourfacebook</span>
<svg class="a" style="left:895.5px;top:514.5px" width="11" height="7" viewBox="0 0 11 7"><path d="M.5 3.5C2 1.2 3.8.5 5.5.5S9 1.2 10.5 3.5C9 5.8 7.2 6.5 5.5 6.5S2 5.8.5 3.5z" fill="#d4d4d4"/><circle cx="5.5" cy="3.4" r="2" fill="#2a2a2a"/><circle cx="4.9" cy="2.8" r=".6" fill="#d4d4d4"/></svg>
<svg class="a" style="left:934.5px;top:511.5px" width="12" height="12" viewBox="0 0 12 12"><path d="M.8 .8h10.4v3h-.8c-.2-1.3-.6-1.9-1.6-1.9H6.8v8.2c0 .5.3.7 1.3.7v.6H3.9v-.6c1 0 1.3-.2 1.3-.7V1.9H3.2c-1 0-1.4.6-1.6 1.9H.8z" fill="#cfcfcf"/></svg>
<span class="lt" style="left:960px;top:513px;">Please follow and tag us</span>
<svg class="a" style="left:895.5px;top:545.0px" width="11" height="7" viewBox="0 0 11 7"><path d="M.5 3.5C2 1.2 3.8.5 5.5.5S9 1.2 10.5 3.5C9 5.8 7.2 6.5 5.5 6.5S2 5.8.5 3.5z" fill="#d4d4d4"/><circle cx="5.5" cy="3.4" r="2" fill="#2a2a2a"/><circle cx="4.9" cy="2.8" r=".6" fill="#d4d4d4"/></svg>
<svg class="a" style="left:934.5px;top:542.0px" width="12" height="12" viewBox="0 0 12 12"><path d="M.8 .8h10.4v3h-.8c-.2-1.3-.6-1.9-1.6-1.9H6.8v8.2c0 .5.3.7 1.3.7v.6H3.9v-.6c1 0 1.3-.2 1.3-.7V1.9H3.2c-1 0-1.4.6-1.6 1.9H.8z" fill="#cfcfcf"/></svg>
<span class="lt" style="left:960px;top:543.5px;">www.yourwebsite.com</span>
<svg class="a" style="left:895.5px;top:569.5px" width="11" height="7" viewBox="0 0 11 7"><path d="M.5 3.5C2 1.2 3.8.5 5.5.5S9 1.2 10.5 3.5C9 5.8 7.2 6.5 5.5 6.5S2 5.8.5 3.5z" fill="#d4d4d4"/><circle cx="5.5" cy="3.4" r="2" fill="#2a2a2a"/><circle cx="4.9" cy="2.8" r=".6" fill="#d4d4d4"/></svg>
<svg class="a" style="left:928.5px;top:570.5px" width="7" height="5" viewBox="0 0 7 5"><path d="M0 0h7L3.5 5z" fill="#e8e8e8"/></svg>
<svg class="a" style="left:938px;top:568px" width="15" height="10" viewBox="0 0 15 10"><path d="M.5 1.5h4l1 1h8v7H.5z" fill="#b8b8b8"/><rect x=".5" y="3.5" width="14" height="6" fill="#cfcfcf"/><rect x="1" y="5" width="13" height=".8" fill="#999"/></svg>
<span class="lt" style="left:959.9px;top:569px;">Background</span>
<svg class="a" style="left:895.5px;top:594.0px" width="11" height="7" viewBox="0 0 11 7"><path d="M.5 3.5C2 1.2 3.8.5 5.5.5S9 1.2 10.5 3.5C9 5.8 7.2 6.5 5.5 6.5S2 5.8.5 3.5z" fill="#d4d4d4"/><circle cx="5.5" cy="3.4" r="2" fill="#2a2a2a"/><circle cx="4.9" cy="2.8" r=".6" fill="#d4d4d4"/></svg>
<svg class="a" style="left:941.5px;top:584px" width="26" height="26" viewBox="0 0 26 26"><path d="M.5 .5h25v15h-9v10H.5z" fill="#fff" stroke="#111" stroke-width="1"/><rect x="17.5" y="17" width="7" height="7" fill="none" stroke="#bdbdbd" stroke-width=".9"/><rect x="16.5" y="16" width="2" height="2" fill="#bdbdbd"/><rect x="23.5" y="23" width="2" height="2" fill="#bdbdbd"/><rect x="16.5" y="23" width="2" height="2" fill="#bdbdbd"/><rect x="23.5" y="16" width="2" height="2" fill="#bdbdbd"/></svg>
<span class="lt" style="left:973.8px;top:593.5px;">Rectangle 1 copy</span>
<svg class="a" style="left:895.5px;top:625.0px" width="11" height="7" viewBox="0 0 11 7"><path d="M.5 3.5C2 1.2 3.8.5 5.5.5S9 1.2 10.5 3.5C9 5.8 7.2 6.5 5.5 6.5S2 5.8.5 3.5z" fill="#d4d4d4"/><circle cx="5.5" cy="3.4" r="2" fill="#2a2a2a"/><circle cx="4.9" cy="2.8" r=".6" fill="#d4d4d4"/></svg>
<svg class="a" style="left:941.5px;top:615px" width="26" height="26" viewBox="0 0 26 26"><path d="M.5 .5h25v15h-9v10H.5z" fill="#fff" stroke="#111" stroke-width="1"/><rect x="17.5" y="17" width="7" height="7" fill="none" stroke="#bdbdbd" stroke-width=".9"/><rect x="16.5" y="16" width="2" height="2" fill="#bdbdbd"/><rect x="23.5" y="23" width="2" height="2" fill="#bdbdbd"/><rect x="16.5" y="23" width="2" height="2" fill="#bdbdbd"/><rect x="23.5" y="16" width="2" height="2" fill="#bdbdbd"/></svg>
<span class="lt" style="left:973.8px;top:624.5px;">Rectangle 1</span>
<svg class="a" style="left:895.5px;top:655.5px" width="11" height="7" viewBox="0 0 11 7"><path d="M.5 3.5C2 1.2 3.8.5 5.5.5S9 1.2 10.5 3.5C9 5.8 7.2 6.5 5.5 6.5S2 5.8.5 3.5z" fill="#d4d4d4"/><circle cx="5.5" cy="3.4" r="2" fill="#2a2a2a"/><circle cx="4.9" cy="2.8" r=".6" fill="#d4d4d4"/></svg>
<svg class="a" style="left:946px;top:655px" width="5" height="7" viewBox="0 0 5 7"><path d="M4 .5v3.5H1.2" fill="none" stroke="#ddd" stroke-width="1"/><path d="M0 4l2-2v4z" fill="#ddd"/></svg>
<svg class="a" style="left:954.5px;top:646.5px" width="25" height="25" viewBox="0 0 25 25"><rect x=".5" y=".5" width="24" height="24" fill="#ecc0b8" stroke="#222" stroke-width="1"/><path d="M1 5c4-2 6 3 10 0s7 1 13-1M1 11c5 3 8-3 12 1s6 0 11 2M1 18c3-1 6 2 10 0s8-2 13 1" fill="none" stroke="#d46a5a" stroke-width="1.6"/><circle cx="7" cy="8" r="2" fill="#f8ece8"/><circle cx="17" cy="15" r="2.5" fill="#f8ece8"/><circle cx="10" cy="21" r="1.8" fill="#f8ece8"/><path d="M14 6l3 3M4 14l2 2" stroke="#333" stroke-width=".8"/></svg>
<span class="lt" style="left:985.6px;top:655px;">Digital Paper - Water Marble - Set 01-06</span>
<svg class="a" style="left:895.5px;top:686.5px" width="11" height="7" viewBox="0 0 11 7"><path d="M.5 3.5C2 1.2 3.8.5 5.5.5S9 1.2 10.5 3.5C9 5.8 7.2 6.5 5.5 6.5S2 5.8.5 3.5z" fill="#d4d4d4"/><circle cx="5.5" cy="3.4" r="2" fill="#2a2a2a"/><circle cx="4.9" cy="2.8" r=".6" fill="#d4d4d4"/></svg>
<svg class="a" style="left:941.5px;top:677px" width="26" height="26" viewBox="0 0 26 26"><path d="M.5 .5h25v15h-9v10H.5z" fill="#fff" stroke="#111" stroke-width="1"/><rect x="17.5" y="17" width="7" height="7" fill="none" stroke="#bdbdbd" stroke-width=".9"/><rect x="16.5" y="16" width="2" height="2" fill="#bdbdbd"/><rect x="23.5" y="23" width="2" height="2" fill="#bdbdbd"/><rect x="16.5" y="23" width="2" height="2" fill="#bdbdbd"/><rect x="23.5" y="16" width="2" height="2" fill="#bdbdbd"/></svg>
<span class="lt" style="left:973.8px;top:686px;text-decoration:underline">Rectangle 2</span>
<div class="a" style="left:914px;top:706px;width:226px;height:7px;background:#586175"></div>
<div class="a" style="left:889px;top:706px;width:24px;height:7px;background:#4d4d4d"></div>
<div class="a" style="left:915px;top:708px;width:22px;height:5px;background:#fff;box-shadow:0 0 0 1px #222"></div>
<div class="a" style="left:1137px;top:131px;width:1px;height:582px;background:#4a4a4a"></div>
<!--/LAYERS-->
</body></html>
